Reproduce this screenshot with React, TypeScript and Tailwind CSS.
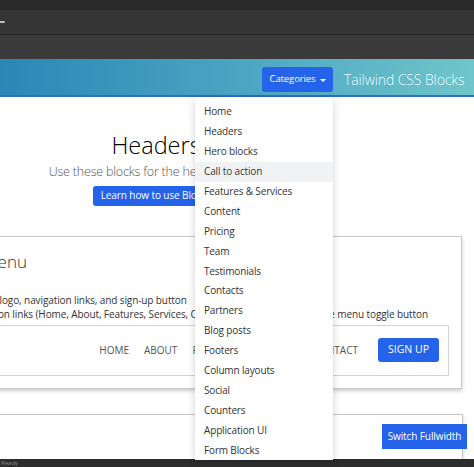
const categories = [
  "Home",
  "Headers",
  "Hero blocks",
  "Call to action",
  "Features & Services",
  "Content",
  "Pricing",
  "Team",
  "Testimonials",
  "Contacts",
  "Partners",
  "Blog posts",
  "Footers",
  "Column layouts",
  "Social",
  "Counters",
  "Application UI",
  "Form Blocks",
];

export default function App() {
  return (
    <div
      className="relative flex h-[467px] w-[474px] flex-col overflow-hidden bg-white text-[#333]"
      style={{ fontFamily: '"Open Sans", "Noto Sans", sans-serif' }}
    >
      {/* window chrome */}
      <div className="h-[10px] bg-[#2a2a2a]" />
      <div className="flex h-[24px] items-center bg-[#353535]">
        <span className="-ml-[3px] h-[2px] w-[8px] rounded bg-[#bbb]" />
      </div>
      <div className="h-[1px] bg-[#222]" />
      <div className="h-[24px] bg-[#3a3a3a]" />

      {/* header */}
      <header className="flex h-[38px] shrink-0 items-center justify-end gap-[11px] border-b-2 border-[#2f6bd8] bg-gradient-to-r from-[#2b86b6] via-[#4aa5c3] to-[#6fc5c9] pr-[11px] pt-[5px]">
        <button className="flex h-[25px] w-[71px] items-center justify-center gap-[4px] rounded-[3px] bg-[#2563eb] text-[9.5px] tracking-[-0.1px] text-white">
          Categories
          <span className="mt-[1px] border-x-[3px] border-t-[3px] border-x-transparent border-t-white" />
        </button>
        <span className="w-[119px] whitespace-nowrap text-[14px] tracking-[-0.1px] font-light text-white/95">
          Tailwind CSS Blocks
        </span>
      </header>

      {/* main */}
      <main className="relative flex-1 overflow-hidden">
        <section className="flex w-[312px] flex-col items-center pt-[32px]">
          <h1 className="text-[23.5px] leading-[32px] font-light text-black">Headers</h1>
          <p className="mt-[2px] whitespace-nowrap text-[12.5px] tracking-[-0.2px] font-light text-[#555]">
            Use these blocks for the header section
          </p>
          <button className="mt-[4px] h-[20px] rounded-[3px] bg-[#2563eb] px-[8px] text-[10px] tracking-[-0.1px] text-white">
            Learn how to use Blocks
          </button>
        </section>

        <div className="-ml-[60px] mt-[30px] w-[522px] border border-[#c8c8c8] pb-[12px] pl-[10px] pr-[12px] pt-[12px] shadow-[0_2px_4px_rgba(0,0,0,0.2)]">
          <h2 className="-ml-[12px] text-[17px] leading-[26px] font-light text-[#333]">Basic Menu</h2>
          <p className="mt-[18px] whitespace-nowrap text-[10px] leading-[14px] tracking-[-0.1px] text-[#333]">
            Includes a logo, navigation links, and sign-up button
          </p>
          <p className="ml-[10px] whitespace-nowrap text-[10px] leading-[14px] tracking-[-0.1px] text-[#333]">
            Navigation links (Home, About, Features, Services, Contact) and responsive mobile menu toggle button
          </p>
          <div className="mt-[4px] flex h-[51px] items-center justify-end gap-[15px] border border-[#d4d4d4] pr-[9px] text-[10px] text-[#555]">
            <span>HOME</span>
            <span>ABOUT</span>
            <span>FEATURES</span>
            <span>SERVICES</span>
            <span>CONTACT</span>
            <button className="ml-[5px] h-[24px] w-[61px] rounded-[3px] bg-[#2563eb] text-[10.5px] text-white">
              SIGN UP
            </button>
          </div>
        </div>

        <div className="-ml-[60px] mt-[25px] h-[80px] w-[523px] border border-[#c8c8c8] shadow-[0_2px_4px_rgba(0,0,0,0.2)]" />
      </main>

      {/* status bar */}
      <footer className="flex h-[8px] shrink-0 items-center bg-[#2d2d2d] pl-[1px] text-[6px] leading-none text-[#888]">
        Ready
      </footer>

      {/* categories dropdown */}
      <ul className="absolute left-[195px] top-[97px] w-[138px] rounded-t-[3px] bg-white pt-[5px] shadow-[0_2px_8px_rgba(0,0,0,0.18)]">
        {categories.map((c) => (
          <li
            key={c}
            className={`flex h-[19.9px] items-center px-[9px] text-[10px] tracking-[-0.15px] text-[#333] ${
              c === "Call to action" ? "bg-[#f1f2f4]" : ""
            }`}
          >
            {c}
          </li>
        ))}
      </ul>

      <button className="absolute left-[382px] top-[424px] h-[25px] w-[85px] bg-[#2563eb] text-[10px] tracking-[-0.1px] text-white">
        Switch Fullwidth
      </button>
    </div>
  );
}
